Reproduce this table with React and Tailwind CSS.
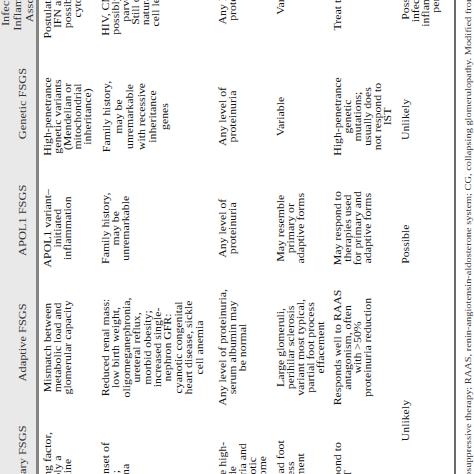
const ROWS = [
  {
    cls: "h-[61px] pt-[4px]",
    cells: [
      ["A circulating factor,", "possibly a", "cytokine"],
      ["Mismatch between", "metabolic load and", "glomerular capacity"],
      ["APOL1 variant–", "initiated", "inflammation"],
      ["High-penetrance", "genetic variants", "(Mendelian or", "mitochondrial", "inheritance)"],
      ["Postulated role for", "IFN and other", "possibly other", "cytokines"],
    ],
  },
  {
    cls: "h-[118px] pt-[1px]",
    cells: [
      ["Abrupt onset of", "NS;", "edema"],
      [
        "Reduced renal mass:",
        "low birth weight,",
        "oligomeganephronia,",
        "ureteral reflux,",
        "morbid obesity;",
        "increased single-",
        "nephron GFR:",
        "cyanotic congenital",
        "heart disease, sickle",
        "cell anemia",
      ],
      ["Family history,", "may be", "unremarkable"],
      ["Family history,", "may be", "unremarkable", "with recessive", "inheritance", "genes"],
      ["HIV, CMV, EBV,", "possibly HHV-8,", "parvovirus,", "Still disease,", "natural killer", "cell leukemia"],
    ],
    lead: ["", "leading-[10.4px]", "", "leading-[11.5px]", ""],
  },
  {
    cls: "h-[58px]",
    cells: [
      ["May have high-", "grade", "proteinuria and", "nephrotic", "syndrome"],
      ["Any level of proteinuria,", "serum albumin may", "be normal"],
      ["Any level of", "proteinuria"],
      ["Any level of", "proteinuria"],
      ["Any level of", "proteinuria"],
    ],
  },
  {
    cls: "h-[57px]",
    cells: [
      ["Widespread foot", "process", "effacement"],
      ["Large glomeruli,", "perihilar sclerosis", "variant most typical,", "partial foot process", "effacement"],
      ["May resemble", "primary or", "adaptive forms"],
      ["Variable"],
      ["Variable"],
    ],
  },
  {
    cls: "h-[68px]",
    cells: [
      ["May respond to", "IST"],
      ["Responds well to RAAS", "antagonism, often", "with >50%", "proteinuria reduction"],
      ["May respond to", "therapies used", "for primary and", "adaptive forms"],
      ["High-penetrance", "genetic", "mutations;", "usually does", "not respond to", "IST"],
      ["Treat the cause"],
    ],
  },
  {
    cls: "h-[53px]",
    cells: [[], ["Unlikely"], ["Possible"], ["Unlikely"], ["Possible if", "infection or", "inflammation", "persists"]],
    shift: ["", "-ml-[124px]", "-ml-[27px]", "-ml-[5px]", ""],
  },
]

const GRID = "grid grid-cols-[116.1px_107.2px_94.9px_94.5px_97.5px]"

function Cell({ lines, className = "" }) {
  return (
    <div className={`flex flex-col items-center ${className}`}>
      {lines.map((l, i) => (
        <div key={i} className="whitespace-nowrap">
          {l}
        </div>
      ))}
    </div>
  )
}

export default function App() {
  return (
    <div className="relative h-[474px] w-[474px] overflow-hidden bg-white">
      <div className="ml-[36px] h-[474px] w-[402px] [transform:rotate(-90deg)_scaleX(1.18)] font-['Liberation_Serif',serif] text-[10px] leading-[10px] text-[#111]">
        <div className="-ml-[62.3px] w-[510px]">
          {/* header */}
          <div className={`${GRID} h-[36px] bg-[#e9e9e9] text-[10.5px] text-[#333]`}>
            <div className="flex items-center justify-center whitespace-nowrap pl-[29.6px]">Primary FSGS</div>
            <div className="flex items-center justify-center whitespace-nowrap pl-[8.5px]">Adaptive FSGS</div>
            <div className="flex items-center justify-center whitespace-nowrap pl-[13.5px]">APOL1 FSGS</div>
            <div className="flex items-center justify-center whitespace-nowrap pl-[22px]">Genetic FSGS</div>
            <div className="flex flex-col items-center justify-center pb-[10px] pl-[14px] leading-[12px]">
              <span className="whitespace-nowrap">Infection- or</span>
              <span className="whitespace-nowrap">Inflammation-</span>
              <span className="whitespace-nowrap">Associated</span>
            </div>
          </div>
          <div className="h-[3px] bg-[#858585]" />

          {ROWS.map((row, r) => (
            <div key={r} className={`${GRID} ${row.cls}`}>
              {row.cells.map((lines, c) => (
                <Cell
                  key={c}
                  lines={lines}
                  className={`${row.lead ? row.lead[c] : ""} ${row.shift ? row.shift[c] : ""} ${c === 4 ? "pl-[14px]" : ""}`}
                />
              ))}
            </div>
          ))}

          <div className="h-[2px] bg-[#6b6b6b]" />

          <div className="mt-[6px] flex text-[8.8px] leading-[12px] text-[#333]">
            <div className="flex w-[64.3px] shrink-0 justify-end overflow-hidden">
              <span className="whitespace-nowrap">GFR, glomerular filtration rate; IFN, interferon; IST, immuno</span>
            </div>
            <span className="whitespace-nowrap">
              suppressive therapy; RAAS, renin-angiotensin-aldosterone system; CG, collapsing glomerulopathy. Modified from
              ref.
            </span>
          </div>
        </div>
      </div>
    </div>
  )
}
